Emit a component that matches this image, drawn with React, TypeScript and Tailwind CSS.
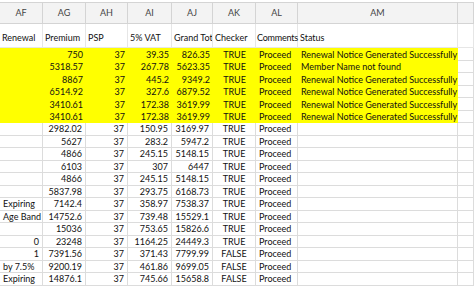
const COLS = [
  "w-[43px]",
  "w-[43px]",
  "w-[42px]",
  "w-[44px]",
  "w-[41px]",
  "w-[43px]",
  "w-[42px]",
  "w-[160px]",
  "w-[16px]",
];

const LETTERS = ["AF", "AG", "AH", "AI", "AJ", "AK", "AL", "AM", ""];

const TITLES = ["Renewal", "Premium", "PSP", "5% VAT", "Grand Total", "Checker", "Comments", "Status", ""];

const OK = "Renewal Notice Generated Successfully";

// [AF, AG, AH, AI, AJ, AK, AL, AM]
const ROWS: { cells: string[]; hl?: boolean }[] = [
  { hl: true, cells: ["", "750", "37", "39.35", "826.35", "TRUE", "Proceed", OK] },
  { hl: true, cells: ["", "5318.57", "37", "267.78", "5623.35", "TRUE", "Proceed", "Member Name not found"] },
  { hl: true, cells: ["", "8867", "37", "445.2", "9349.2", "TRUE", "Proceed", OK] },
  { hl: true, cells: ["", "6514.92", "37", "327.6", "6879.52", "TRUE", "Proceed", OK] },
  { hl: true, cells: ["", "3410.61", "37", "172.38", "3619.99", "TRUE", "Proceed", OK] },
  { hl: true, cells: ["", "3410.61", "37", "172.38", "3619.99", "TRUE", "Proceed", OK] },
  { cells: ["", "2982.02", "37", "150.95", "3169.97", "TRUE", "Proceed", ""] },
  { cells: ["", "5627", "37", "283.2", "5947.2", "TRUE", "Proceed", ""] },
  { cells: ["", "4866", "37", "245.15", "5148.15", "TRUE", "Proceed", ""] },
  { cells: ["", "6103", "37", "307", "6447", "TRUE", "Proceed", ""] },
  { cells: ["", "4866", "37", "245.15", "5148.15", "TRUE", "Proceed", ""] },
  { cells: ["", "5837.98", "37", "293.75", "6168.73", "TRUE", "Proceed", ""] },
  { cells: ["Expiring", "7142.4", "37", "358.97", "7538.37", "TRUE", "Proceed", ""] },
  { cells: ["Age Band (Changed)", "14752.6", "37", "739.48", "15529.1", "TRUE", "Proceed", ""] },
  { cells: ["", "15036", "37", "753.65", "15826.6", "TRUE", "Proceed", ""] },
  { cells: ["0", "23248", "37", "1164.25", "24449.3", "TRUE", "Proceed", ""] },
  { cells: ["1", "7391.56", "37", "371.43", "7799.99", "FALSE", "Proceed", ""] },
  { cells: ["by 7.5%", "9200.19", "37", "461.86", "9699.05", "FALSE", "Proceed", ""] },
  { cells: ["Expiring", "14876.1", "37", "745.66", "15658.8", "FALSE", "Proceed", ""] },
];

function align(col: number, v: string) {
  if (col === 5) return "justify-center";
  if (col >= 1 && col <= 4) return "justify-end";
  if (col === 0 && /^\d+$/.test(v)) return "justify-end";
  return "justify-start";
}

export default function App() {
  return (
    <div className="h-[286px] w-[474px] overflow-hidden bg-white pt-[2px] font-['Lato',sans-serif] text-[9px] text-[#111]">
      {/* column letters */}
      <div className="flex h-[22px] border-y border-[#d4d4d4] bg-[#f3f3f3] text-[9px] text-[#444]">
        {LETTERS.map((l, i) => (
          <div key={i} className={`${COLS[i]} flex shrink-0 items-center justify-center border-r border-[#d4d4d4]`}>
            {l}
          </div>
        ))}
      </div>

      {/* titles row */}
      <div className="flex h-[24px] border-b border-[#e6e6e6]">
        {TITLES.map((t, i) => (
          <div
            key={i}
            className={`${COLS[i]} flex shrink-0 items-end whitespace-nowrap border-r border-[#e6e6e6] pb-[3px] ${
              i === 6 ? "pl-[1px] tracking-[-0.2px]" : "overflow-hidden pl-[2px]"
            }`}
          >
            {t}
          </div>
        ))}
      </div>

      {ROWS.map((r, ri) => (
        <div key={ri} className="flex h-[12.5px]">
          {[...r.cells, ""].map((v, ci) => {
            const yellow = r.hl && ci < 8;
            return (
              <div
                key={ci}
                className={`${COLS[ci]} ${align(ci, v)} flex shrink-0 items-center overflow-hidden whitespace-nowrap px-[3px] leading-none ${
                  yellow ? "bg-[#ffff00]" : "border-b border-r border-[#dcdcdc]"
                }`}
              >
                {v}
              </div>
            );
          })}
        </div>
      ))}
    </div>
  );
}
